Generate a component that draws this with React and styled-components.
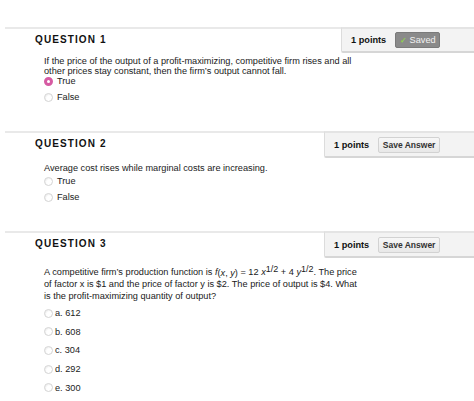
import React from 'react'
import styled, { createGlobalStyle } from 'styled-components'

const questions = [
  {
    id: 1,
    saved: true,
    bodyGap: 3,
    optionsGap: 0,
    text: () => 'If the price of the output of a profit-maximizing, competitive firm rises and all other prices stay constant, then the firm’s output cannot fall.',
    options: ['True', 'False'],
    selected: 0,
  },
  {
    id: 2,
    bodyGap: 5,
    optionsGap: 3,
    text: () => 'Average cost rises while marginal costs are increasing.',
    options: ['True', 'False'],
  },
  {
    id: 3,
    wide: true,
    bodyGap: 8,
    optionsGap: 5,
    text: () => (
      <>
        A competitive firm’s production function is <i>f</i>
        <Lowered>(<i>x</i>, <i>y</i>)</Lowered> = 12 <i>x</i>
        <Sup>1/2</Sup> + 4 <i>y</i>
        <Sup>1/2</Sup>. The price of factor x is $1 and the price of factor y is $2. The
        price of output is $4. What is the profit-maximizing quantity of output?
      </>
    ),
    options: ['a. 612', 'b. 608', 'c. 304', 'd. 292', 'e. 300'],
  },
]

export default function App() {
  return (
    <>
      <GlobalStyle />
      <Page>
        {questions.map(q => (
          <Question key={q.id}>
            <Header>
              <Title>QUESTION {q.id}</Title>
              <PointsBox $wide={!q.saved}>
                <Points>1 points</Points>
                {q.saved ? (
                  <SavedButton>
                    <Check>✓</Check>Saved
                  </SavedButton>
                ) : (
                  <SaveButton>Save Answer</SaveButton>
                )}
              </PointsBox>
            </Header>
            <Body $gap={q.bodyGap}>
              <Prompt $wide={q.wide}>{q.text()}</Prompt>
              <Options $wide={q.wide} $gap={q.optionsGap}>
                {q.options.map((o, i) => (
                  <Option key={o} $wide={q.wide}>
                    <Radio $on={q.selected === i} />
                    <Label $wide={q.wide}>{o}</Label>
                  </Option>
                ))}
              </Options>
            </Body>
          </Question>
        ))}
      </Page>
    </>
  )
}

/***************************** Styled Components *****************************/

const GlobalStyle = createGlobalStyle`
  body {
    margin: 0;
    background: #fff;
    font-family: "Liberation Sans", Arial, Helvetica, sans-serif;
    color: #1a1a1a;
  }
`

const Page = styled.div`
  width: 474px;
  padding-top: 27px;
`

const Question = styled.section`
  margin-left: 5px;
  border-top: 2px solid #e9e9e9;
  margin-bottom: 29px;
  &:last-child {
    margin-bottom: 0;
  }
`

const Header = styled.div`
  display: flex;
  justify-content: space-between;
  align-items: flex-start;
`

const Title = styled.div`
  padding: 5px 0 0 30px;
  font-size: 10px;
  font-weight: bold;
  letter-spacing: 1.1px;
  color: #111;
`

const PointsBox = styled.div`
  display: flex;
  align-items: center;
  gap: 9px;
  width: ${p => (p.$wide ? 150 : 133)}px;
  height: ${p => (p.$wide ? 27 : 26)}px;
  box-sizing: border-box;
  padding: 0 34px 0 9px;
  margin-top: -2px;
  background: #f3f3f3;
  border-top: 2px solid #e4e4e4;
  border-left: 1px solid #dcdcdc;
  border-bottom: 2px solid #d6d6d6;
  border-bottom-left-radius: 2px;
`

const Points = styled.span`
  font-size: 9.2px;
  font-weight: bold;
  color: #111;
  white-space: nowrap;
`

const SavedButton = styled.div`
  display: flex;
  align-items: center;
  justify-content: center;
  gap: 3px;
  width: 48px;
  height: 16px;
  box-sizing: border-box;
  background: #8a8a8a;
  border: 1px solid #7a7a7a;
  border-radius: 2px;
  color: #f2f2f2;
  font-size: 9.2px;
`

const Check = styled.span`
  color: #8fd14f;
  font-size: 8px;
  font-weight: bold;
`

const SaveButton = styled.div`
  display: flex;
  align-items: center;
  justify-content: center;
  width: 64px;
  height: 16px;
  box-sizing: border-box;
  background: linear-gradient(#f7f7f7, #e8e8e8);
  border: 1px solid #d2d2d2;
  border-radius: 2px;
  color: #333;
  font-size: 8.5px;
  font-weight: bold;
  white-space: nowrap;
`

const Body = styled.div`
  padding-left: 39px;
  margin-top: ${p => p.$gap}px;
`

const Prompt = styled.p`
  margin: 0;
  width: 314px;
  font-size: 9.2px;
  line-height: ${p => (p.$wide ? 12 : 10)}px;
`

const Lowered = styled.span`
  position: relative;
  top: 1px;
`

const Sup = styled.sup`
  font-size: 9px;
  line-height: 0;
  vertical-align: 3px;
`

const Options = styled.div`
  display: flex;
  flex-direction: column;
  gap: ${p => (p.$wide ? 6.7 : 6)}px;
  margin-top: ${p => p.$gap}px;
`

const Option = styled.div`
  display: flex;
  align-items: center;
  height: ${p => (p.$wide ? 12 : 10)}px;
`

const Radio = styled.span`
  width: 9px;
  height: 9px;
  box-sizing: border-box;
  border-radius: 50%;
  flex: none;
  background: #fff;
  border: ${p => (p.$on ? '3px solid #d65ba3' : '1px solid #d4d4d4')};
  box-shadow: ${p => (p.$on ? 'none' : 'inset 1px 1px 1px rgba(0,0,0,0.06)')};
`

const Label = styled.span`
  margin-left: ${p => (p.$wide ? 2 : 4)}px;
  font-size: 9.2px;
  color: #222;
`
